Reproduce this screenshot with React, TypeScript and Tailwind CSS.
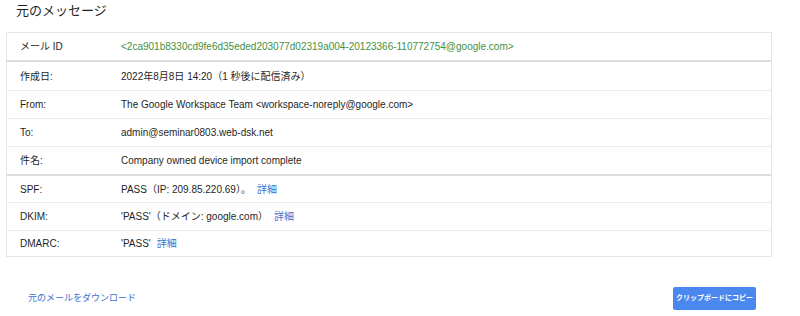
import React from 'react'

const font = { fontFamily: '"Liberation Sans", "Noto Sans CJK JP", sans-serif' }

type Row = { label: string; value: React.ReactNode; strong?: boolean; h: string }

const Detail = () => <a href="#" className="text-[#3b6fd0] ml-[6px]">詳細</a>

const rows: Row[] = [
  {
    label: 'メール ID',
    value: <span className="text-[#3f8f3f]">&lt;2ca901b8330cd9fe6d35eded203077d02319a004-20123366-110772754@google.com&gt;</span>,
    strong: true,
    h: 'h-[29px]',
  },
  { label: '作成日:', value: '2022年8月8日 14:20（1 秒後に配信済み）', h: 'h-[29px]' },
  { label: 'From:', value: 'The Google Workspace Team <workspace-noreply@google.com>', h: 'h-[28px]' },
  { label: 'To:', value: 'admin@seminar0803.web-dsk.net', h: 'h-[28px]' },
  { label: '件名:', value: 'Company owned device import complete', strong: true, h: 'h-[29px]' },
  { label: 'SPF:', value: <>PASS（IP: 209.85.220.69）。<Detail /></>, h: 'h-[27px]' },
  { label: 'DKIM:', value: <>'PASS'（ドメイン: google.com）<Detail /></>, h: 'h-[28px]' },
  { label: 'DMARC:', value: <>'PASS'<Detail /></>, h: 'h-[25px]' },
]

export default function App() {
  return (
    <div className="w-[800px] h-[316px] bg-white text-[#1f1f1f] overflow-hidden" style={font}>
      <h1 className="pl-[16px] pt-[2px] h-[32px] text-[13px] leading-[18px]">元のメッセージ</h1>
      <div className="ml-[6px] w-[766px] border border-[#e6e6e6]">
        {rows.map((r, i) => (
          <div
            key={r.label}
            className={`flex items-center text-[10px] ${r.h} ${
              i === rows.length - 1 ? '' : r.strong ? 'border-b-2 border-[#dddddd]' : 'border-b border-[#ebebeb]'
            }`}
          >
            <div className="w-[114px] pl-[13px] shrink-0">{r.label}</div>
            <div className="whitespace-nowrap">{r.value}</div>
          </div>
        ))}
      </div>
      <div className="flex items-center justify-between pl-[28px] pr-[16px] mt-[30px] w-[772px]">
        <a href="#" className="text-[9px] text-[#3b6fd0]">元のメールをダウンロード</a>
        <button className="h-[23px] w-[83px] bg-[#4a88ef] text-white text-[7px] font-bold rounded-[2px] whitespace-nowrap">
          クリップボードにコピー
        </button>
      </div>
    </div>
  )
}
